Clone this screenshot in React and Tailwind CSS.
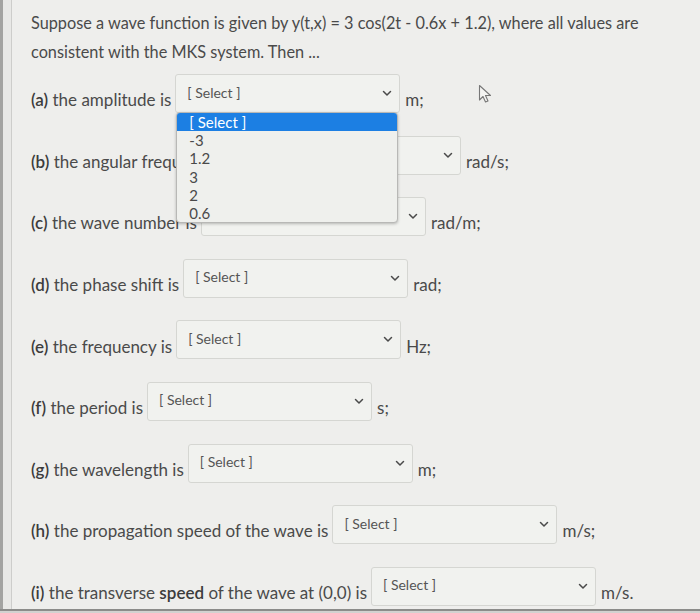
import React from "react";

function Chevron() {
  return (
    <svg width="10" height="7" viewBox="0 0 10 7" className="shrink-0">
      <polyline points="1.5,1.5 5,5 8.5,1.5" fill="none" stroke="#4a4a4a" strokeWidth="1.5" strokeLinecap="round" strokeLinejoin="round" />
    </svg>
  );
}

function SelectBox({ children }) {
  return (
    <div className="relative shrink-0 w-[225px] h-[39px] border border-[#d5d6d2] bg-[#f1f2ef] rounded-[3px] flex items-center justify-between pl-[11px] pr-[7px]">
      <span className="text-[14px] text-[#555] pb-[3px]">[ Select ]</span>
      <Chevron />
      {children}
    </div>
  );
}

function Row({ letter, text, bold, after, unit, dropdown }) {
  return (
    <div className="flex items-center h-[39px]">
      <span className="mt-[13px] whitespace-nowrap">
        <span className="font-semibold text-[#3c3c3c]">({letter})</span> {text}
        {bold && <span className="font-semibold text-[#3c3c3c]">{bold}</span>}
        {after}
      </span>
      <div className="ml-[4px]">
        <SelectBox>{dropdown}</SelectBox>
      </div>
      <span className="ml-[5px] mt-[13px] whitespace-nowrap">{unit}</span>
    </div>
  );
}

function Dropdown() {
  const opts = ["-3", "1.2", "3", "2", "0.6"];
  return (
    <div className="absolute top-full left-0 w-[222px] z-10 border border-[#b8b8b6] bg-[#eff0ed] rounded-[4px] shadow-[0_1px_3px_rgba(0,0,0,0.25)] overflow-hidden">
      <div className="h-[18px] bg-[#1c7fe3] text-white text-[15px] leading-[18px] px-[12px]">[ Select ]</div>
      {opts.map((o) => (
        <div key={o} className="h-[18.3px] text-[15px] leading-[18.3px] px-[12px] text-[#4a4a4a]">
          {o}
        </div>
      ))}
    </div>
  );
}

export default function App() {
  return (
    <div className="w-[700px] h-[613px] overflow-hidden bg-[#eeeeec] flex flex-col" style={{ fontFamily: "Lato, 'Open Sans', sans-serif" }}>
      <div className="flex flex-1 min-h-0">
        <div className="w-[3px] bg-[#a3a3a1]" />
        <div className="w-[8px] bg-[#e8e8e6]" />
        <div className="w-[1px] bg-[#cdcdcb]" />
        <div className="relative flex-1 pl-[19px] pt-[8px] text-[17px] text-[#4a4a4a]">
          <p className="leading-[29px] w-[640px] text-[16.3px]">
            Suppose a wave function is given by y(t,x) = 3 cos(2t - 0.6x + 1.2), where all values are consistent with the MKS system. Then ...
          </p>
          <div className="mt-[8px] flex flex-col gap-[22.6px]">
            <Row letter="a" text="the amplitude is" unit="m;" dropdown={<Dropdown />} />
            <Row letter="b" text="the angular frequency is" unit="rad/s;" />
            <Row letter="c" text="the wave number is" unit="rad/m;" />
            <Row letter="d" text="the phase shift is" unit="rad;" />
            <Row letter="e" text="the frequency is" unit="Hz;" />
            <Row letter="f" text="the period is" unit="s;" />
            <Row letter="g" text="the wavelength is" unit="m;" />
            <Row letter="h" text="the propagation speed of the wave is" unit="m/s;" />
            <Row letter="i" text="the transverse " bold="speed" after=" of the wave at (0,0) is" unit="m/s." />
          </div>
          <svg className="absolute left-[466px] top-[84px]" width="14" height="20" viewBox="0 0 14 20">
            <path d="M1.5 1.5 L1.5 16 L5 12.5 L7.5 18 L10 17 L7.5 11.5 L12.5 11.5 Z" fill="#f4f4f2" stroke="#777" strokeWidth="1.1" strokeLinejoin="round" />
          </svg>
        </div>
      </div>
      <div className="h-[2px] bg-[#8c8c8a]" />
      <div className="h-[2px] bg-[#d2d2d0]" />
    </div>
  );
}
